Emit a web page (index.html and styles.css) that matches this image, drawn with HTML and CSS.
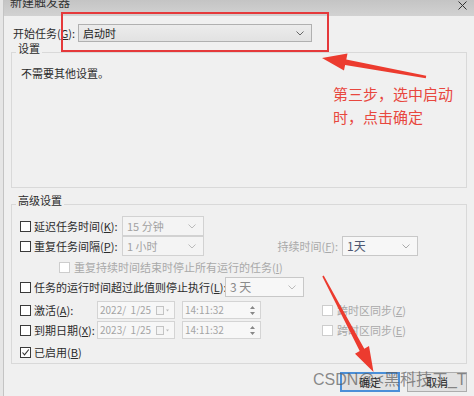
FILE: index.html
```html
<!DOCTYPE html>
<html lang="zh-CN">
<head>
<meta charset="utf-8">
<title>新建触发器</title>
<link rel="stylesheet" href="styles.css">
</head>
<body>
<div class="stage">
  <div class="win">
    <div class="titlebar">
      <span class="title">新建触发器</span>
      <svg class="close" width="9" height="9" viewBox="0 0 9 9"><path d="M0.5 0.5 L8.5 8.5 M8.5 0.5 L0.5 8.5" stroke="#333" stroke-width="1" fill="none"/></svg>
    </div>

    <div class="start-row">
      <span class="start-label">开始任务(<u>G</u>):</span>
      <div class="combo combo-main">
        <span>启动时</span>
        <svg class="chev" width="8" height="5" viewBox="0 0 8 5"><path d="M0.5 0.5 L4 4 L7.5 0.5" fill="none" stroke="#666"/></svg>
      </div>
    </div>

    <fieldset class="group group-settings">
      <legend>设置</legend>
      <p class="settings-text">不需要其他设置。</p>
    </fieldset>

    <fieldset class="group group-adv">
      <legend>高级设置</legend>

      <div class="row r1">
        <span class="cb"></span>
        <span class="lab w-short">延迟任务时间(<u>K</u>):</span>
        <div class="combo combo-dis w82"><span>15 分钟</span><svg class="chev" width="8" height="5" viewBox="0 0 8 5"><path d="M0.5 0.5 L4 4 L7.5 0.5" fill="none" stroke="#bbb"/></svg></div>
      </div>

      <div class="row r2">
        <span class="cb"></span>
        <span class="lab w-short">重复任务间隔(<u>P</u>):</span>
        <div class="combo combo-dis w82"><span>1 小时</span><svg class="chev" width="8" height="5" viewBox="0 0 8 5"><path d="M0.5 0.5 L4 4 L7.5 0.5" fill="none" stroke="#bbb"/></svg></div>
        <span class="lab dur-lab dis">持续时间(<u>F</u>):</span>
        <div class="combo combo-en w76"><span class="val-dark">1天</span><svg class="chev" width="8" height="5" viewBox="0 0 8 5"><path d="M0.5 0.5 L4 4 L7.5 0.5" fill="none" stroke="#aaa"/></svg></div>
      </div>

      <div class="row r3">
        <span class="cb cb-dis indent"></span>
        <span class="lab dis">重复持续时间结束时停止所有运行的任务(<u>I</u>)</span>
      </div>

      <div class="row r4">
        <span class="cb"></span>
        <span class="lab w-long">任务的运行时间超过此值则停止执行(<u>L</u>):</span>
        <div class="combo combo-en w79"><span class="val-mid">3 天</span><svg class="chev" width="8" height="5" viewBox="0 0 8 5"><path d="M0.5 0.5 L4 4 L7.5 0.5" fill="none" stroke="#bbb"/></svg></div>
      </div>

      <div class="row r5">
        <span class="cb"></span>
        <span class="lab w-date">激活(<u>A</u>):</span>
        <div class="field date"><span class="fv">2022/&nbsp; 1/25</span>
          <svg class="cal" width="14" height="9" viewBox="0 0 14 9"><rect x="0.5" y="0.5" width="7" height="8" fill="#f4f4f4" stroke="#c4c4c4"/><path d="M10 3.5 L13 3.5 L11.5 5.5 Z" fill="#bbb"/></svg>
        </div>
        <div class="field time"><span class="fv">14:11:32</span>
          <svg class="spin" width="5" height="11" viewBox="0 0 5 11"><path d="M0 4 L2.5 1 L5 4 Z M0 7 L2.5 10 L5 7 Z" fill="#888"/></svg>
        </div>
        <span class="cb cb-dis tz"></span>
        <span class="lab dis">跨时区同步(<u>Z</u>)</span>
      </div>

      <div class="row r6">
        <span class="cb"></span>
        <span class="lab w-date">到期日期(<u>X</u>):</span>
        <div class="field date"><span class="fv">2023/&nbsp; 1/25</span>
          <svg class="cal" width="14" height="9" viewBox="0 0 14 9"><rect x="0.5" y="0.5" width="7" height="8" fill="#f4f4f4" stroke="#c4c4c4"/><path d="M10 3.5 L13 3.5 L11.5 5.5 Z" fill="#bbb"/></svg>
        </div>
        <div class="field time"><span class="fv">14:11:32</span>
          <svg class="spin" width="5" height="11" viewBox="0 0 5 11"><path d="M0 4 L2.5 1 L5 4 Z M0 7 L2.5 10 L5 7 Z" fill="#888"/></svg>
        </div>
        <span class="cb cb-dis tz"></span>
        <span class="lab dis">跨时区同步(<u>E</u>)</span>
      </div>

      <div class="row r7">
        <span class="cb cb-on"><svg width="9" height="9" viewBox="0 0 9 9"><path d="M1.5 4.5 L3.5 6.8 L7.8 1.5" fill="none" stroke="#333" stroke-width="1.1"/></svg></span>
        <span class="lab">已启用(<u>B</u>)</span>
      </div>
    </fieldset>

    <div class="buttons">
      <button class="btn btn-primary">确定</button>
      <button class="btn">取消</button>
    </div>
  </div>

  <div class="red-box"></div>
  <svg class="arrows" width="474" height="396" viewBox="0 0 474 396">
    <polygon points="322,58 347.5,53.5 346.3,59.5 426.2,75.8 425.8,78.2 345.1,65 344,70.5" fill="#ec3b2f"/>
    <polygon points="322.3,276.4 323.7,275.6 364.3,348.8 369,346 373.5,372 355,353.7 359.7,351.1" fill="#ec3b2f"/>
  </svg>
  <div class="note">第三步，选中启动<br>时，点击确定</div>
  <div class="watermark">CSDN@&lt;黑科技工_T</div>
</div>
</body>
</html>
```

FILE: styles.css
```css
* { box-sizing: border-box; }

html, body {
  margin: 0;
  padding: 0;
}

body {
  width: 474px;
  height: 396px;
  overflow: hidden;
  background: #e6e6e6;
  font-family: "Noto Sans CJK SC", "Microsoft YaHei", sans-serif;
  font-size: 11px;
  line-height: 14px;
  color: #2b2b2b;
}

.stage {
  position: relative;
  width: 474px;
  height: 396px;
}

.win {
  margin-left: 3px;
  width: 471px;
  height: 396px;
  border-left: 1px solid #c4c4c4;
  background: #f0f0f0;
}

u { text-decoration: underline; text-underline-offset: 1px; }

.titlebar {
  height: 16px;
  background: linear-gradient(#c4c4c4, #d2d2d2);
  display: flex;
  justify-content: space-between;
  align-items: flex-start;
  overflow: hidden;
}
.title {
  display: block;
  margin-top: -5px;
  padding-left: 6px;
  font-size: 12px;
  line-height: 14px;
  color: #333;
}
.close { margin: 1px 7px 0 0; }

.start-row {
  display: flex;
  align-items: center;
  height: 18px;
  margin-top: 8px;
  padding-left: 9px;
}
.start-label { width: 65px; }

.combo {
  display: flex;
  align-items: center;
  justify-content: space-between;
  height: 20px;
  padding: 0 7px 0 4px;
  border: 1px solid #d2d2d2;
  background: #f4f4f4;
  white-space: nowrap;
}
.combo-main {
  width: 234px;
  height: 18px;
  border-color: #b0b0b0;
  background: linear-gradient(#ececec, #e2e2e2);
  color: #1e1e1e;
}
.combo-dis { color: #a2a2a2; }
.combo-en { background: #f7f7f7; border-color: #c8c8c8; }
.val-dark { color: #4d5872; font-size: 12px; }
.val-mid { color: #8a8a8a; font-size: 12px; }
.w82 { width: 82px; }
.w76 { width: 76px; }
.w79 { width: 79px; }

.group {
  margin: 0 0 0 7px;
  padding: 0;
  width: 456px;
  border: 1px solid #d9d9d9;
  min-inline-size: 0;
}
.group legend {
  margin-left: 4px;
  padding: 0 2px 8px;
  line-height: 12px;
  color: #2b2b2b;
}

.settings-text {
  margin: 0;
  padding: 4px 0 0 9px;
  height: 125px;
}

.group-adv {
  margin-top: 6px;
  padding: 2px 0 1px;
}

.row {
  display: flex;
  align-items: center;
  height: 20px;
  padding-left: 8px;
}
.r3 { margin-top: 1px; }
.r5 { margin-top: 3px; }
.r7 { margin-top: 2px; }

.cb {
  flex: none;
  width: 11px;
  height: 11px;
  border: 1px solid #3a3a3a;
  background: #fff;
  margin-right: 3px;
  display: flex;
  align-items: center;
  justify-content: center;
}
.cb-dis { border-color: #cdcdcd; }
.cb.indent { margin-left: 39px; margin-right: 4px; }
.cb.tz { margin-left: 61px; margin-right: 4px; }

.lab { white-space: nowrap; flex: none; }
.w-short { width: 88px; }
.w-long { width: 191px; }
.w-date { width: 63px; }
.dis { color: #a9a9a9; }
.dur-lab { width: 134px; text-align: right; margin-right: 4px; }

.field {
  flex: none;
  display: flex;
  align-items: center;
  justify-content: space-between;
  height: 18px;
  border: 1px solid #d4d4d4;
  background: #f7f7f7;
  color: #a4a4a4;
  padding: 0 4px 0 2px;
  white-space: nowrap;
  overflow: hidden;
}
.fv { font-size: 10px; white-space: nowrap; }
.cal, .spin { flex: none; }
.date { width: 78px; }
.time { width: 79px; margin-left: 7px; padding-right: 5px; }

.buttons {
  display: flex;
  justify-content: flex-end;
  gap: 7px;
  margin-top: 8px;
  padding-right: 7px;
}
.btn {
  width: 60px;
  height: 20px;
  padding: 0;
  font: inherit;
  color: #222;
  background: #e1e1e1;
  border: 1px solid #adadad;
}
.btn-primary {
  border: 2px solid #4a8fd8;
}

.red-box {
  position: absolute;
  left: 61px;
  top: 12px;
  width: 268px;
  height: 40px;
  border: 2px solid #e5393b;
}
.arrows {
  position: absolute;
  left: 0;
  top: 0;
}
.note {
  position: absolute;
  left: 333px;
  top: 82px;
  font-size: 15px;
  line-height: 23px;
  color: #e8473e;
}
.watermark {
  position: absolute;
  left: 313px;
  top: 371px;
  font-family: "Liberation Sans", "Noto Sans CJK SC", sans-serif;
  font-size: 16px;
  line-height: 18px;
  color: rgba(90, 90, 90, 0.7);
  white-space: nowrap;
}
```
